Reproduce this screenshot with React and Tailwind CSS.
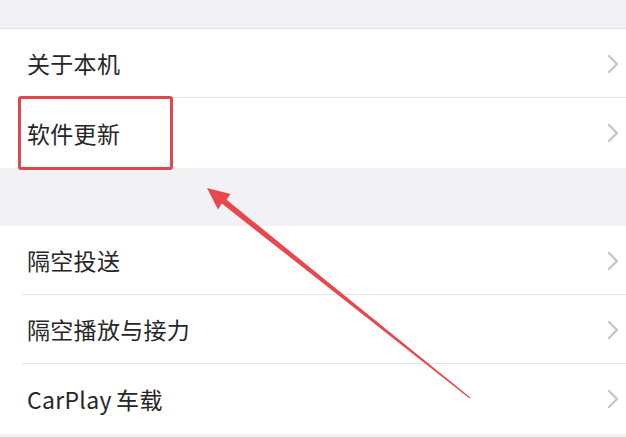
import React from "react";

const Chevron = () => (
  <svg width="12" height="20" viewBox="0 0 12 20" className="shrink-0">
    <polyline points="2,2 10,10 2,18" fill="none" stroke="#c4c4c8" strokeWidth="2.2" strokeLinecap="round" strokeLinejoin="round" />
  </svg>
);

const Row = ({ label, h, last }) => (
  <div className={`${h} flex items-center pl-[27px] pr-[7px] relative bg-white`}>
    <span className="flex-1 text-[23px] text-[#262628] tracking-[0.3px] [word-spacing:-1px]">{label}</span>
    <Chevron />
    {!last && <div className="absolute left-[22px] right-0 bottom-0 h-px bg-[#e6e6e9]" />}
  </div>
);

const App = () => {
  return (
    <div
      className="w-[626px] h-[437px] bg-[#f2f2f6] relative overflow-hidden"
      style={{ fontFamily: '"Noto Sans CJK SC", "Noto Sans", sans-serif' }}
    >
      <div className="h-[29px] border-b border-[#e2e2e6]" />
      <div className="flex flex-col">
        <Row label="关于本机" h="h-[69px]" />
        <Row label="软件更新" h="h-[70px]" last />
      </div>
      <div className="h-[58px]" />
      <div className="flex flex-col">
        <Row label="隔空投送" h="h-[69px]" />
        <Row label="隔空播放与接力" h="h-[69px]" />
        <Row label="CarPlay 车载" h="h-[70px]" last />
      </div>

      {/* highlight box */}
      <div className="absolute left-[18px] top-[96px] w-[155px] h-[74px] border-[3px] border-[#e2474b] rounded-[3px]" />

      {/* arrow */}
      <svg className="absolute left-0 top-0" width="626" height="437" viewBox="0 0 626 437">
        <polygon
          points="207,188 230.4,193.9 226.6,199.8 470.4,397.6 469.6,398.4 221.8,203.6 218,209.5"
          fill="#e8474b"
        />
      </svg>
    </div>
  );
};

export default App;
